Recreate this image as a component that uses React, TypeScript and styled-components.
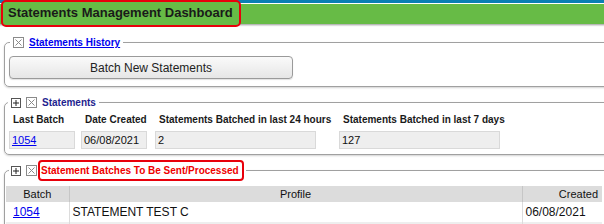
import React from "react";
import styled, { createGlobalStyle } from "styled-components";

const GlobalStyle = createGlobalStyle`
  body {
    margin: 0;
    font-family: "Liberation Sans", Arial, sans-serif;
    background: #fff;
    color: #111;
    overflow: hidden;
  }
`;

const Page = styled.div`
  width: 640px;
`;

const TopBar = styled.div`
  border-top: 3px solid #0a7fb4;
  padding-top: 1px;
  background: #fff;
`;

const GreenBar = styled.div`
  height: 20px;
  background: #67bb46;
  border-bottom: 1px solid #b8b8b8;
  box-shadow: 0 1px 1px #ddd;
  display: flex;
  align-items: center;
`;

const Title = styled.h1`
  margin: -5px 0 -4px 1px;
  padding: 3px 6px 4px 5px;
  background: #67bb46;
  border: 2px solid #e8000b;
  border-radius: 5px;
  font-size: 13px;
  font-weight: bold;
  color: #1a1a1a;
  line-height: 16px;
`;

const Fieldset = styled.fieldset<{ $pad: string; $top: number }>`
  margin: ${(p) => p.$top}px 0 0 4px;
  padding: ${(p) => p.$pad};
  border: 1px solid #a0a0a0;
  border-radius: 5px;
  box-shadow: 0 1px 2px rgba(0, 0, 0, 0.18);
  min-width: 0;
`;

const Legend = styled.legend<{ $indent: number; $outlined?: boolean }>`
  margin-left: ${(p) => p.$indent}px;
  padding: ${(p) => (p.$outlined ? "0 2px" : "0 3px")};
  display: flex;
  align-items: center;
  gap: 5px;
  font-size: 10px;
  font-weight: bold;
  line-height: 13px;
`;

const LegendLink = styled.a`
  color: #0000ee;
  text-decoration: underline;
  cursor: pointer;
`;

const LegendText = styled.span<{ $tone: "navy" | "red" }>`
  color: ${(p) => (p.$tone === "red" ? "#ee0000" : "#1f1f8f")};
  ${(p) =>
    p.$tone === "red" &&
    `
    border: 2px solid #e8000b;
    border-radius: 4px;
    padding: 2px 3px 2px 1px;
    margin-left: -4px;
  `}
`;

const Button = styled.button`
  width: 284px;
  height: 23px;
  border: 1px solid #9a9a9a;
  border-radius: 4px;
  background: linear-gradient(#fafafa, #e6e6e6);
  font-family: "Liberation Sans", Arial, sans-serif;
  font-size: 12px;
  color: #222;
  box-shadow: 0 1px 1px rgba(0, 0, 0, 0.12);
  cursor: pointer;
`;

const StatsGrid = styled.div`
  display: grid;
  grid-template-columns: 72px 74px 184px 170px;
`;

const StatCell = styled.div<{ $w: number }>`
  display: flex;
  flex-direction: column;
  width: ${(p) => p.$w}px;
`;

const StatLabel = styled.div`
  font-size: 10px;
  font-weight: bold;
  color: #1a1a1a;
  padding-left: 4px;
  line-height: 13px;
  margin-bottom: 5px;
  white-space: nowrap;
`;

const StatValue = styled.div`
  height: 16px;
  line-height: 17px;
  background: #eeeeee;
  border: 1px solid #d9d9d9;
  font-size: 11px;
  padding-left: 2px;
  color: #111;
`;

const ValueLink = styled.a`
  color: #0000ee;
  text-decoration: underline;
`;

const Table = styled.table`
  width: 596px;
  border-collapse: collapse;
  table-layout: fixed;
  font-size: 12px;
`;

const Th = styled.th<{ $align: "center" | "right" }>`
  background: #dcdcdc;
  font-weight: normal;
  font-size: 11px;
  height: 16px;
  padding: 0 4px;
  text-align: ${(p) => p.$align};
  color: #111;
  border-left: 1px solid #c6c6c6;
  &:first-child {
    border-left: none;
  }
`;

const Tr = styled.tr<{ $striped?: boolean }>`
  background: ${(p) => (p.$striped ? "#eeeeee" : "#fff")};
`;

const Td = styled.td`
  height: 20px;
  padding: 0 3px;
  color: #111;
  border-left: 1px solid #dcdcdc;
  white-space: nowrap;
  &:first-child {
    border-left: none;
    padding-left: 7px;
  }
`;

const XBox = () => (
  <svg width="11" height="11" viewBox="0 0 11 11">
    <rect x="0.5" y="0.5" width="10" height="10" fill="#fff" stroke="#8a8a8a" />
    <path d="M2.5 2.5 L8.5 8.5 M8.5 2.5 L2.5 8.5" stroke="#8a8a8a" strokeWidth="1" />
  </svg>
);

const PlusBox = () => (
  <svg width="10" height="10" viewBox="0 0 10 10">
    <rect x="0.5" y="0.5" width="9" height="9" fill="#fff" stroke="#555" />
    <path d="M2 5 H8 M5 2 V8" stroke="#222" strokeWidth="1" />
  </svg>
);

const stats = [
  { label: "Last Batch", value: "1054", link: true, w: 66 },
  { label: "Date Created", value: "06/08/2021", w: 66 },
  { label: "Statements Batched in last 24 hours", value: "2", w: 161 },
  { label: "Statements Batched in last 7 days", value: "127", w: 161 },
];

export default function App() {
  return (
    <Page>
      <GlobalStyle />
      <TopBar>
        <GreenBar>
          <Title>Statements Management Dashboard</Title>
        </GreenBar>
      </TopBar>

      <Fieldset $top={11} $pad="7px 4px 7px 4px">
        <Legend $indent={1}>
          <XBox />
          <LegendLink>Statements History</LegendLink>
        </Legend>
        <Button>Batch New Statements</Button>
      </Fieldset>

      <Fieldset $top={9} $pad="4px 4px 5px 4px">
        <Legend $indent={-1}>
          <PlusBox />
          <XBox />
          <LegendText $tone="navy">Statements</LegendText>
        </Legend>
        <StatsGrid>
          {stats.map((s) => (
            <StatCell key={s.label} $w={s.w}>
              <StatLabel>{s.label}</StatLabel>
              <StatValue>
                {s.link ? <ValueLink>{s.value}</ValueLink> : s.value}
              </StatValue>
            </StatCell>
          ))}
        </StatsGrid>
      </Fieldset>

      <Fieldset $top={5} $pad="5px 1px 0 1px">
        <Legend $indent={3} $outlined>
          <PlusBox />
          <XBox />
          <LegendText $tone="red">Statement Batches To Be Sent/Processed</LegendText>
        </Legend>
        <Table>
          <colgroup>
            <col style={{ width: 63 }} />
            <col style={{ width: 453 }} />
            <col style={{ width: 80 }} />
          </colgroup>
          <thead>
            <tr>
              <Th $align="center">Batch</Th>
              <Th $align="center">Profile</Th>
              <Th $align="right">Created</Th>
            </tr>
          </thead>
          <tbody>
            <Tr>
              <Td>
                <ValueLink>1054</ValueLink>
              </Td>
              <Td>STATEMENT TEST C</Td>
              <Td>06/08/2021</Td>
            </Tr>
            <Tr $striped>
              <Td>&nbsp;</Td>
              <Td>&nbsp;</Td>
              <Td>&nbsp;</Td>
            </Tr>
          </tbody>
        </Table>
      </Fieldset>
    </Page>
  );
}
